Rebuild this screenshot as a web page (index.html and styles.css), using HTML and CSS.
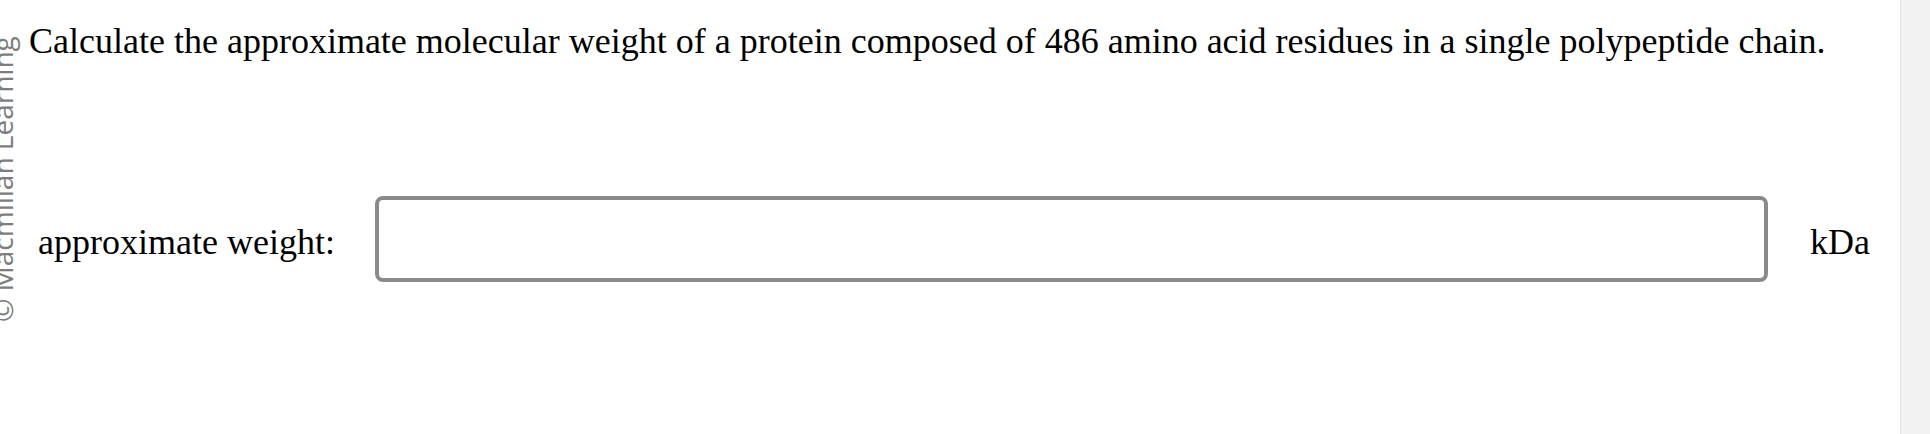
FILE: index.html
```html
<!DOCTYPE html>
<html lang="en">
<head>
    <meta charset="UTF-8">
    <title>Question</title>
    <link rel="stylesheet" href="styles.css">
</head>
<body>
    <div class="page">
        <div class="watermark">© Macmillan Learning</div>

        <div class="question">
            <p class="prompt">Calculate the approximate molecular weight of a protein composed of 486 amino acid residues in a single polypeptide chain.</p>

            <div class="answer-row">
                <label for="weight" class="answer-label">approximate weight:</label>
                <input type="text" id="weight" class="answer-input">
                <span class="answer-unit">kDa</span>
            </div>
        </div>

        <div class="side-rail"></div>
    </div>
</body>
</html>
```

FILE: styles.css
```css
html, body {
    margin: 0;
    padding: 0;
    height: 100%;
    background: #fff;
}
.page {
    position: relative;
    display: flex;
    height: 100%;
    overflow: hidden;
}
/* copyright tag turned sideways along the left edge */
.watermark {
    position: absolute;
    left: -9px;
    top: 322px;
    transform-origin: 0 0;
    transform: rotate(-90deg);
    font-family: "Open Sans", sans-serif;
    font-size: 28px;
    line-height: 22px;
    color: #7d7d7d;
    white-space: nowrap;
}
.question {
    flex: 1;
    padding: 21px 0 0 29px;
    font-family: "Liberation Serif", "Times New Roman", serif;
    font-size: 36px;
    color: #000;
}
.prompt {
    margin: 0;
    line-height: 40px;
}
.answer-row {
    display: flex;
    align-items: center;
    margin-top: 135px;
    padding-left: 9px;
    padding-right: 30px;
}
.answer-label,
.answer-unit {
    line-height: 40px;
    padding-top: 6px;
}
.answer-label {
    width: 337px;
    flex: none;
}
.answer-input {
    flex: 1;
    height: 78px;
    box-sizing: content-box;
    padding: 0 12px;
    border: 4px solid #8a8a8a;
    border-radius: 8px;
    background: #fff;
    font: inherit;
    outline: none;
}
.answer-unit {
    margin-left: 42px;
}
.side-rail {
    width: 29px;
    flex: none;
    background: #f2f2f2;
    border-left: 1px solid #e2e2e2;
}
```
